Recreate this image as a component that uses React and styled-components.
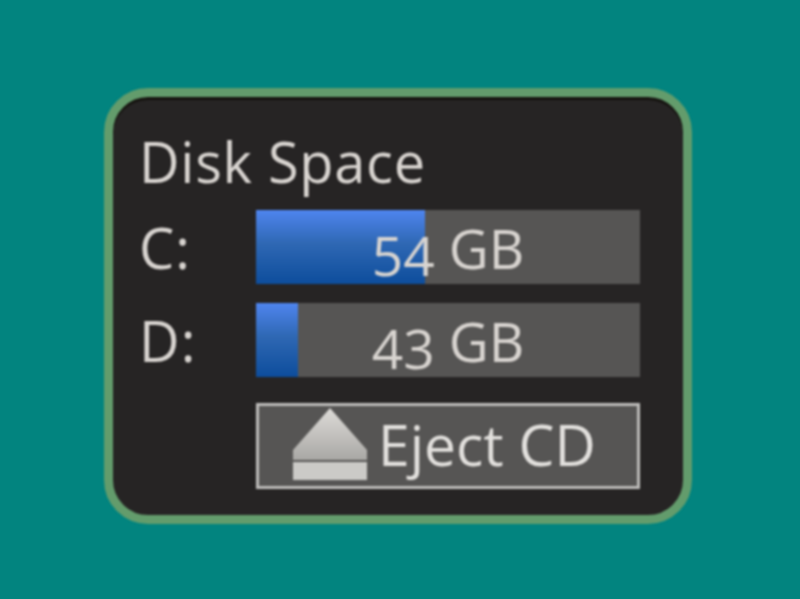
import React from "react";
import styled, { createGlobalStyle } from "styled-components";

const GlobalStyle = createGlobalStyle`
  html, body {
    margin: 0;
    padding: 0;
    background: #02847f;
  }
  * {
    box-sizing: border-box;
  }
`;

const Desktop = styled.div`
  width: 800px;
  height: 599px;
  overflow: hidden;
  padding: 88px 0 0 104px;
  background: #02847f;
  font-family: "Open Sans", "Noto Sans", sans-serif;
  color: #d8d4d0;
`;

const Panel = styled.section`
  width: 588px;
  height: 436px;
  padding: 31px 43px 0 26px;
  background: #262424;
  border: 9px solid #639c6c;
  border-radius: 44px;
  box-shadow: inset 0 3px 0 #15130f;
  filter: blur(0.8px);
`;

const Title = styled.h1`
  margin: 0 0 16px;
  height: 66px;
  font-size: 56px;
  font-weight: 400;
  line-height: 66px;
  letter-spacing: 0.7px;
`;

const Row = styled.div`
  display: grid;
  grid-template-columns: 117px 384px;
  align-items: center;
  height: ${(p) => p.$height}px;
  margin-bottom: ${(p) => p.$gap}px;
`;

const Label = styled.span`
  font-size: 56px;
  line-height: 1;
  letter-spacing: 1px;
`;

const Bar = styled.div`
  position: relative;
  height: 100%;
  background: #565554;
`;

const Fill = styled.div`
  height: 100%;
  background: linear-gradient(#4f85ef 0%, #2f68b4 45%, #0d4d9c 100%);
`;

const BarText = styled.span`
  position: absolute;
  inset: 0;
  display: flex;
  align-items: center;
  justify-content: center;
  gap: 14px;
  font-size: 55px;
  line-height: 1;
`;

const Digits = styled.span`
  transform: translateY(7px);
`;

const EjectButton = styled.button`
  grid-column: 2;
  display: flex;
  align-items: center;
  gap: 11px;
  width: 100%;
  height: 100%;
  padding: 0 0 4px 34px;
  background: #565554;
  border: 3px solid #bdbcba;
  color: #e2e0dd;
  font-family: inherit;
  font-size: 57px;
  line-height: 1;
`;

const drives = [
  { label: "C:", size: "54", used: 44, gap: 19 },
  { label: "D:", size: "43", used: 11, gap: 26 },
];

function EjectIcon() {
  return (
    <svg width="74" height="72" viewBox="0 0 74 72">
      <defs>
        <linearGradient id="eject" x1="0" y1="0" x2="0" y2="1">
          <stop offset="0" stopColor="#dedcd8" />
          <stop offset="1" stopColor="#a9a8a5" />
        </linearGradient>
      </defs>
      <path d="M37 0 L74 42 V52 H0 V42 Z" fill="url(#eject)" />
      <rect x="0" y="54" width="74" height="18" fill="#cbcac7" />
    </svg>
  );
}

export default function App() {
  return (
    <>
      <GlobalStyle />
      <Desktop>
        <Panel>
          <Title>Disk Space</Title>
          {drives.map((d) => (
            <Row key={d.label} $height={74} $gap={d.gap}>
              <Label>{d.label}</Label>
              <Bar>
                <Fill style={{ width: `${d.used}%` }} />
                <BarText>
                  <Digits>{d.size}</Digits>
                  <span>GB</span>
                </BarText>
              </Bar>
            </Row>
          ))}
          <Row $height={86} $gap={0}>
            <EjectButton>
              <EjectIcon />
              Eject CD
            </EjectButton>
          </Row>
        </Panel>
      </Desktop>
    </>
  );
}
